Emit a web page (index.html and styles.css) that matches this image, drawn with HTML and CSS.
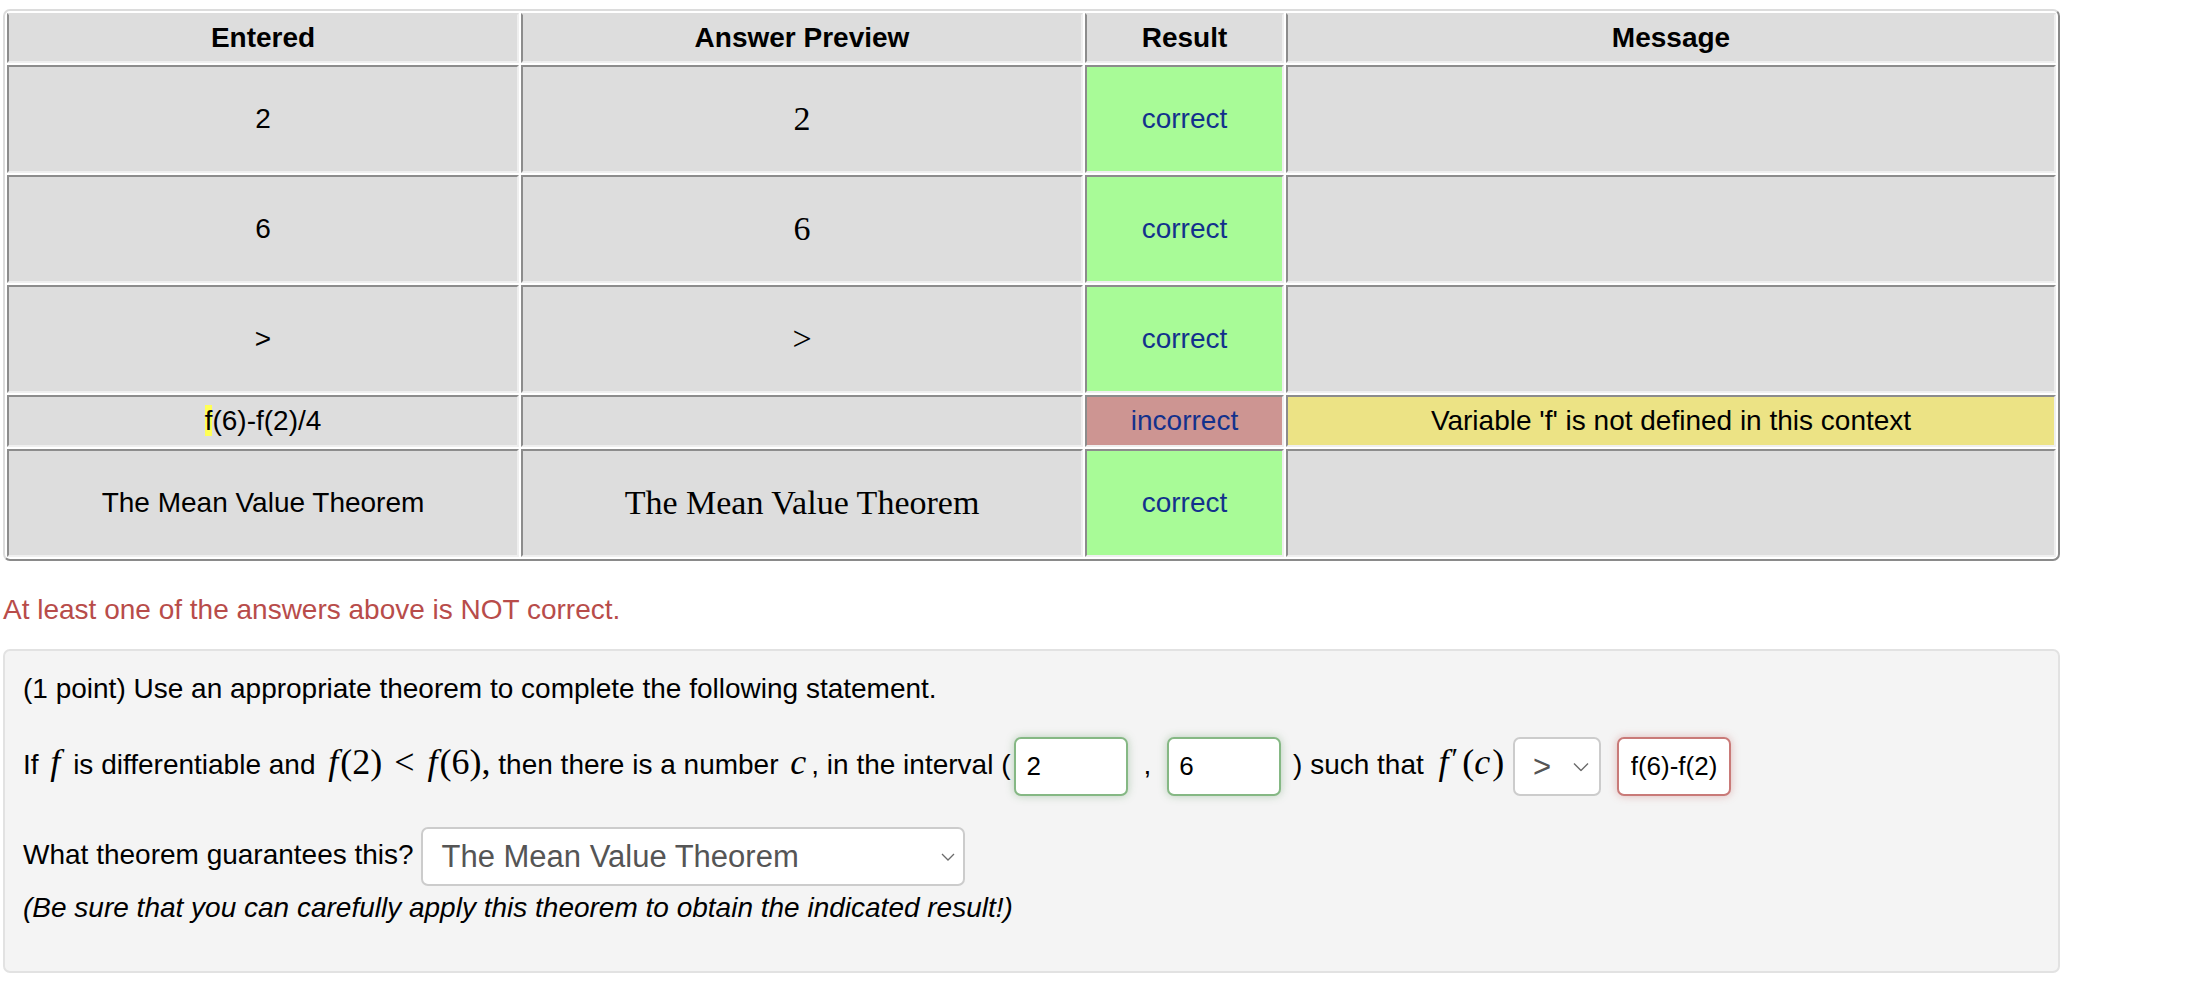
FILE: index.html
```html
<!DOCTYPE html>
<html lang="en">
<head>
<meta charset="utf-8">
<title>Attempt results</title>
<link rel="stylesheet" href="styles.css">
</head>
<body>
<div class="page">
  <table class="attempt-results">
    <thead>
      <tr>
        <th class="col-entered">Entered</th>
        <th class="col-preview">Answer Preview</th>
        <th class="col-result">Result</th>
        <th class="col-message">Message</th>
      </tr>
    </thead>
    <tbody>
      <tr class="row-tall">
        <td>2</td>
        <td class="math">2</td>
        <td class="res-ok">correct</td>
        <td></td>
      </tr>
      <tr class="row-tall">
        <td>6</td>
        <td class="math">6</td>
        <td class="res-ok">correct</td>
        <td></td>
      </tr>
      <tr class="row-tall">
        <td>&gt;</td>
        <td class="math">&gt;</td>
        <td class="res-ok">correct</td>
        <td></td>
      </tr>
      <tr class="row-short">
        <td><span class="hl">f</span>(6)-f(2)/4</td>
        <td class="math"></td>
        <td class="res-bad">incorrect</td>
        <td class="res-alert">Variable 'f' is not defined in this context</td>
      </tr>
      <tr class="row-tall">
        <td>The Mean Value Theorem</td>
        <td class="math">The Mean Value Theorem</td>
        <td class="res-ok">correct</td>
        <td></td>
      </tr>
    </tbody>
  </table>

  <p class="warning">At least one of the answers above is NOT correct.</p>

  <div class="problem">
    <p class="intro">(1 point) Use an appropriate theorem to complete the following statement.</p>
    <p class="statement">If <span class="mi solo">f</span> is differentiable and <span class="mexpr"><span class="mi">f</span>(2)<span class="mo">&lt;</span><span class="mi">f</span>(6),</span> then there is a number <span class="mi solo">c</span>, in the interval (<input class="ans ans-ok" type="text" value="2"><span class="sep">,</span><input class="ans ans-ok" type="text" value="6"> ) such that <span class="mexpr prime-expr"><span class="mi">f</span><span class="prime">′</span>(<span class="mi">c</span>)</span> <span class="select-wrap"><select class="sel sel-rel"><option>&gt;</option></select><svg class="chev" width="16" height="9" viewBox="0 0 16 9"><path d="M1 1 L8 8 L15 1" fill="none" stroke="#6b6b6b" stroke-width="1.4"/></svg></span> <input class="ans ans-bad" type="text" value="f(6)-f(2)"></p>
    <p class="question">What theorem guarantees this? <span class="select-wrap"><select class="sel sel-thm"><option>The Mean Value Theorem</option></select><svg class="chev" width="14" height="8" viewBox="0 0 14 8"><path d="M1 1 L7 7 L13 1" fill="none" stroke="#6b6b6b" stroke-width="1.3"/></svg></span></p>
    <p class="note">(Be sure that you can carefully apply this theorem to obtain the indicated result!)</p>
  </div>
</div>
</body>
</html>
```

FILE: styles.css
```css
html, body {
  margin: 0;
  padding: 0;
  background: #ffffff;
}

body {
  font-family: "Liberation Sans", Arial, Helvetica, sans-serif;
  font-size: 28px;
  line-height: 40px;
  color: #000000;
}

.page {
  padding: 9px 0 0 3px;
  width: 2057px;
}

/* ---------- results table ---------- */
.attempt-results {
  width: 2057px;
  table-layout: fixed;
  border-collapse: separate;
  border-spacing: 2px;
  border: 2px solid;
  border-color: #dcdcdc #8a8a8a #8a8a8a #dcdcdc;
  border-radius: 7px;
}

.attempt-results th,
.attempt-results td {
  box-sizing: border-box;
  background: #dddddd;
  text-align: center;
  vertical-align: middle;
  padding: 0 5px;
  border: 2px solid;
  border-color: #8c8c8c #efefef #efefef #8c8c8c;
  font-size: 28px;
  line-height: 34px;
}

.attempt-results th {
  height: 50px;
  font-weight: bold;
  border-top-color: #dddddd;
}

.col-entered { width: 512px; }
.col-preview { width: 562px; }
.col-result  { width: 199px; }
.col-message { width: 770px; }

.row-tall td { height: 108px; }
.row-short td { height: 52px; }

.attempt-results td.math {
  font-family: "Liberation Serif", "Times New Roman", serif;
  font-size: 34px;
}

.attempt-results td.res-ok {
  background: #a8fb97;
  color: #13318c;
}

.attempt-results td.res-bad {
  background: #cd9592;
  color: #13318c;
}

.attempt-results td.res-alert {
  background: #ece385;
}

.hl {
  background: #ffff55;
}

/* ---------- warning ---------- */
.warning {
  margin: 29px 0 19px 0;
  color: #b84c4a;
}

/* ---------- problem box ---------- */
.problem {
  box-sizing: border-box;
  width: 2057px;
  height: 324px;
  padding: 18px 18px 0 18px;
  background: #f4f4f4;
  border: 2px solid #e2e2e2;
  border-radius: 7px;
}

.problem p {
  margin: 0;
}

.statement {
  margin-top: 28px !important;
  white-space: nowrap;
}

.question {
  margin-top: 31px !important;
}

.note {
  margin-top: 2px !important;
  font-style: italic;
}

.mi {
  font-family: "Liberation Serif", "Times New Roman", serif;
  font-style: italic;
  font-size: 36px;
  margin-right: 2px;
}

.mi.solo {
  margin: 0 5px 0 4px;
}

.mexpr {
  font-family: "Liberation Serif", "Times New Roman", serif;
  font-size: 36px;
  margin-left: 5px;
}

.mexpr.prime-expr {
  margin-left: 7px;
}

.mo {
  margin: 0 13px 0 12px;
}

.prime {
  font-size: 30px;
  vertical-align: 6px;
  margin-left: 1px;
  margin-right: 4px;
}

.sep {
  margin: 0 12px 0 11px;
}

.ans {
  box-sizing: border-box;
  width: 114px;
  height: 59px;
  margin: 0 4px;
  padding: 0 10px;
  vertical-align: middle;
  font-family: "Liberation Sans", Arial, Helvetica, sans-serif;
  font-size: 26px;
  color: #000000;
  background: #ffffff;
  border: 2px solid;
  border-radius: 7px;
  outline: none;
}

.ans-ok {
  border-color: #85b884;
  box-shadow: 0 0 8px rgba(70, 136, 71, 0.35);
}

.ans-bad {
  border-color: #c97a78;
  box-shadow: 0 0 8px rgba(185, 74, 72, 0.35);
  padding: 0 8px 0 12px;
}

.select-wrap {
  position: relative;
  display: inline-block;
  vertical-align: middle;
  line-height: 0;
}

.sel {
  box-sizing: border-box;
  -webkit-appearance: none;
  appearance: none;
  height: 59px;
  padding: 0 0 0 18px;
  font-family: "Liberation Sans", Arial, Helvetica, sans-serif;
  font-size: 31px;
  color: #555555;
  background: #ffffff;
  border: 2px solid #cccccc;
  border-radius: 7px;
  outline: none;
}

.sel-rel {
  width: 88px;
  margin: 0 4px 0 1px;
}

.sel-thm {
  width: 544px;
}

.chev {
  position: absolute;
  top: 50%;
  right: 12px;
  transform: translateY(-50%);
}

.sel-rel + .chev {
  right: 16px;
}

.sel-thm + .chev {
  right: 10px;
}
```
